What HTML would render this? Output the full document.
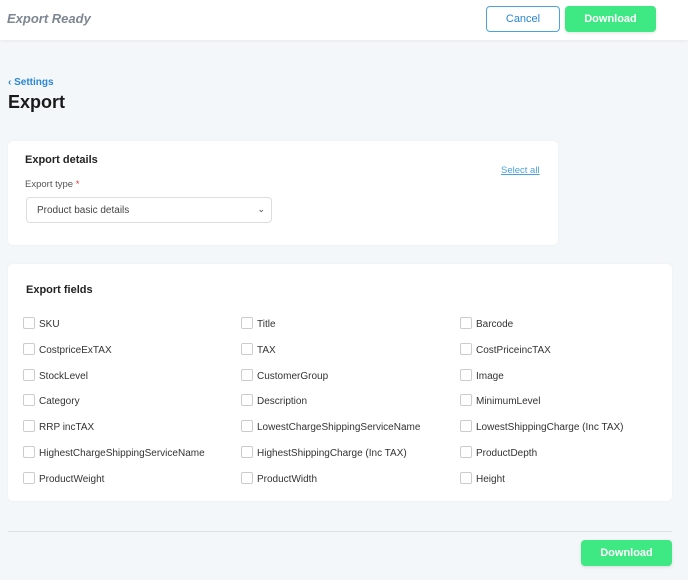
<!DOCTYPE html>
<html><head><style>
*{box-sizing:border-box;margin:0;padding:0}
body{width:688px;height:580px;background:#f4f7fa;font-family:"Liberation Sans",sans-serif;position:relative;overflow:hidden;color:#222}
.top{position:absolute;left:0;top:0;width:688px;height:40px;background:#fff;box-shadow:0 1px 3px rgba(0,0,0,.06)}
.brand{position:absolute;left:7px;top:11px;font-size:13px;font-style:italic;font-weight:bold;color:#7d8792}
.btn{position:absolute;border-radius:4px;font-size:11px;font-weight:bold;text-align:center}
.cancel{left:486px;top:6px;width:74px;height:26px;border:1px solid #4aa3df;color:#2a86d1;background:#fff;line-height:24px;font-weight:normal}
.dl{background:#3ee882;color:#fff;box-shadow:0 1px 3px rgba(0,0,0,.12)}
.back{position:absolute;left:8px;top:77px;font-size:10px;font-weight:bold;color:#2a86d1}
h1{position:absolute;left:8px;top:92px;font-size:18px;font-weight:bold;color:#1a1a1a}
.card{position:absolute;background:#fff;border-radius:5px;box-shadow:0 0 3px rgba(0,0,0,.04)}
.ct{position:absolute;font-size:11px;font-weight:bold;color:#222}
.sel{position:absolute;left:26px;top:197px;width:246px;height:26px;border:1px solid #ddd;border-radius:4px;font-size:10px;color:#444;padding:7px 10px}
.f{position:absolute;font-size:10px;color:#333}
.f i{position:absolute;left:0;top:-1px;width:12px;height:12px;border:1px solid #ccc;border-radius:2px;background:#fff}
.f span{position:absolute;left:16px;top:1px;white-space:nowrap}
</style></head><body>
<div class="top"><div class="brand">Export Ready</div>
<div class="btn cancel">Cancel</div>
<div class="btn dl" style="left:565px;top:6px;width:91px;height:26px;line-height:26px">Download</div></div>
<div class="back">‹ Settings</div>
<h1>Export</h1>
<div class="card" style="left:8px;top:141px;width:550px;height:104px"></div>
<div class="ct" style="left:25px;top:154px">Export details</div>
<div style="position:absolute;left:25px;top:179px;font-size:9.5px;color:#555">Export type <span style="color:#e33">*</span></div>
<div style="position:absolute;left:501px;top:165px;font-size:9.5px;color:#4aa3df;text-decoration:underline">Select all</div>
<div class="sel">Product basic details<span style="position:absolute;right:6px;top:6px;font-size:9px">⌄</span></div>
<div class="card" style="left:8px;top:264px;width:664px;height:237px"></div>
<div class="ct" style="left:26px;top:284px">Export fields</div>
<div style="position:absolute;left:8px;top:531px;width:664px;height:1px;background:#dde1e5"></div>
<div class="btn dl" style="left:581px;top:540px;width:91px;height:26px;line-height:26px">Download</div>
<div class="f" style="left:23px;top:318px"><i></i><span>SKU</span></div>
<div class="f" style="left:241px;top:318px"><i></i><span>Title</span></div>
<div class="f" style="left:460px;top:318px"><i></i><span>Barcode</span></div>
<div class="f" style="left:23px;top:344px"><i></i><span>CostpriceExTAX</span></div>
<div class="f" style="left:241px;top:344px"><i></i><span>TAX</span></div>
<div class="f" style="left:460px;top:344px"><i></i><span>CostPriceincTAX</span></div>
<div class="f" style="left:23px;top:370px"><i></i><span>StockLevel</span></div>
<div class="f" style="left:241px;top:370px"><i></i><span>CustomerGroup</span></div>
<div class="f" style="left:460px;top:370px"><i></i><span>Image</span></div>
<div class="f" style="left:23px;top:395px"><i></i><span>Category</span></div>
<div class="f" style="left:241px;top:395px"><i></i><span>Description</span></div>
<div class="f" style="left:460px;top:395px"><i></i><span>MinimumLevel</span></div>
<div class="f" style="left:23px;top:421px"><i></i><span>RRP incTAX</span></div>
<div class="f" style="left:241px;top:421px"><i></i><span>LowestChargeShippingServiceName</span></div>
<div class="f" style="left:460px;top:421px"><i></i><span>LowestShippingCharge (Inc TAX)</span></div>
<div class="f" style="left:23px;top:447px"><i></i><span>HighestChargeShippingServiceName</span></div>
<div class="f" style="left:241px;top:447px"><i></i><span>HighestShippingCharge (Inc TAX)</span></div>
<div class="f" style="left:460px;top:447px"><i></i><span>ProductDepth</span></div>
<div class="f" style="left:23px;top:473px"><i></i><span>ProductWeight</span></div>
<div class="f" style="left:241px;top:473px"><i></i><span>ProductWidth</span></div>
<div class="f" style="left:460px;top:473px"><i></i><span>Height</span></div>
</body></html>
